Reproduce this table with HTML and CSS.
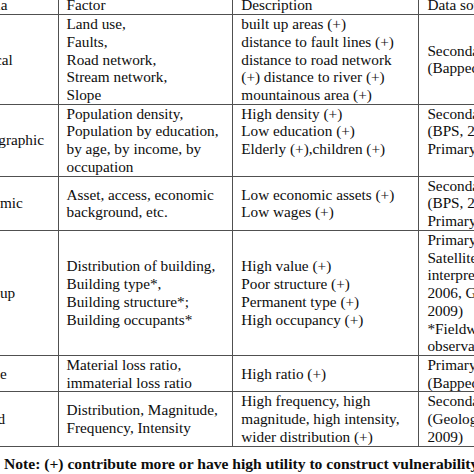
FILE: index.html
```html
<!DOCTYPE html>
<html>
<head>
<meta charset="utf-8">
<link rel="stylesheet" href="styles.css">
</head>
<body>
<div class="page">
<table class="grid">
<colgroup>
<col class="c1"><col class="c2"><col class="c3"><col class="c4">
</colgroup>
<thead>
<tr><th>Criteria</th><th>Factor</th><th>Description</th><th>Data source</th></tr>
</thead>
<tbody>
<tr>
<td>Physical</td>
<td>Land use,<br>Faults,<br>Road network,<br>Stream network,<br>Slope</td>
<td>built up areas (+)<br>distance to fault lines (+)<br>distance to road network<br>(+) distance to river (+)<br>mountainous area (+)</td>
<td>Secondary<br>(Bappeda, 2010)</td>
</tr>
<tr>
<td>Demographic</td>
<td>Population density,<br>Population by education,<br>by age, by income, by<br>occupation</td>
<td class="top">High density (+)<br>Low education (+)<br>Elderly (+),children (+)</td>
<td class="top">Secondary<br>(BPS, 2010),<br>Primary</td>
</tr>
<tr>
<td>Economic</td>
<td>Asset, access, economic<br>background, etc.</td>
<td>Low economic assets (+)<br>Low wages (+)</td>
<td>Secondary<br>(BPS, 2010),<br>Primary</td>
</tr>
<tr>
<td>Build-up</td>
<td>Distribution of building,<br>Building type*,<br>Building structure*;<br>Building occupants*</td>
<td>High value (+)<br>Poor structure (+)<br>Permanent type (+)<br>High occupancy (+)</td>
<td>Primary;<br>Satellite image<br>interpretation (Quickbird<br>2006, Google Earth<br>2009)<br>*Fieldwork<br>observation</td>
</tr>
<tr>
<td>Income</td>
<td>Material loss ratio,<br>immaterial loss ratio</td>
<td>High ratio (+)</td>
<td>Primary<br>(Bappeda, 2010)</td>
</tr>
<tr>
<td>Hazard</td>
<td>Distribution, Magnitude,<br>Frequency, Intensity</td>
<td>High frequency, high<br>magnitude, high intensity,<br>wider distribution (+)</td>
<td>Secondary<br>(Geological Agency,<br>2009)</td>
</tr>
</tbody>
</table>
<p class="note">Note: (+) contribute more or have high utility to construct vulnerability index</p>
</div>
</body>
</html>
```
FILE: styles.css
```css
html, body {
  margin: 0;
  padding: 0;
  background: #ffffff;
  overflow: hidden;
}
.page {
  width: 474px;
  height: 474px;
  overflow: hidden;
  font-family: "Liberation Serif", "Times New Roman", serif;
  color: #0d0d0d;
}
.grid {
  border-collapse: collapse;
  table-layout: fixed;
  width: 680px;
  margin-left: -48px;
  margin-top: -4.7px;
  font-size: 15.25px;
  line-height: 17.73px;
}
.c1 { width: 105.5px; }
.c2 { width: 174.8px; }
.c3 { width: 186.1px; }
.c4 { width: 213.6px; }
.grid th,
.grid td {
  border: 1px solid #505050;
  padding: 0 0 0 8px;
  text-align: left;
  vertical-align: middle;
  font-weight: normal;
  white-space: nowrap;
  overflow: hidden;
}
.grid td.top {
  vertical-align: top;
}
.note {
  margin: 8px 0 0 4px;
  font-size: 15.6px;
  line-height: 17.73px;
  font-weight: bold;
  white-space: nowrap;
}
```
